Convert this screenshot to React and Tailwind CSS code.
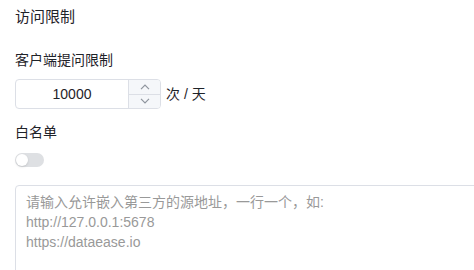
import React, { useState } from "react";

export default function App() {
  const [count, setCount] = useState(10000);
  const [whitelist, setWhitelist] = useState(false);

  return (
    <div
      className="w-[474px] h-[270px] overflow-hidden bg-white text-[#1f2329]"
      style={{ fontFamily: '"Liberation Sans", "Noto Sans CJK SC", sans-serif' }}
    >
      <div className="pl-[15px] pt-[6px] w-[520px]">
        {/* title */}
        <div className="text-[15px] leading-[22px]">访问限制</div>

        {/* daily limit */}
        <div className="mt-[21px] text-[14px] leading-[22px]">客户端提问限制</div>
        <div className="mt-[8px] flex items-center">
          <div className="flex h-[30px] w-[146px] rounded-[4px] border border-[#dcdfe6] overflow-hidden">
            <input
              className="flex-1 min-w-0 text-center text-[14px] outline-none text-[#1f2329]"
              value={count}
              onChange={(e) => setCount(e.target.value)}
            />
            <div className="flex flex-col w-[32px] border-l border-[#dcdfe6] bg-[#f5f7fa] text-[#8f959e]">
              <button
                className="flex-1 flex items-center justify-center border-b border-[#dcdfe6]"
                onClick={() => setCount((c) => Number(c) + 1)}
              >
                <svg width="10" height="6" viewBox="0 0 10 6" fill="none" stroke="currentColor" strokeWidth="1.2">
                  <path d="M1 5.2L5 1.2l4 4" />
                </svg>
              </button>
              <button
                className="flex-1 flex items-center justify-center"
                onClick={() => setCount((c) => Math.max(0, Number(c) - 1))}
              >
                <svg width="10" height="6" viewBox="0 0 10 6" fill="none" stroke="currentColor" strokeWidth="1.2">
                  <path d="M1 0.8l4 4 4-4" />
                </svg>
              </button>
            </div>
          </div>
          <span className="ml-[5px] text-[14px]">次 / 天</span>
        </div>

        {/* whitelist */}
        <div className="mt-[12px] text-[14px] leading-[22px]">白名单</div>
        <button
          onClick={() => setWhitelist(!whitelist)}
          className={`mt-[10px] relative block w-[29px] h-[14px] rounded-full ${whitelist ? "bg-[#3370ff]" : "bg-[#dee0e3]"}`}
        >
          <span
            className={`absolute top-[1px] h-[12px] w-[12px] rounded-full bg-white shadow-sm ${whitelist ? "left-[16px]" : "left-[1px]"}`}
          />
        </button>

        <textarea
          className="mt-[18px] block w-[480px] h-[90px] resize-none rounded-[4px] border border-[#dcdfe6] px-[10px] pt-[6px] pb-[5px] text-[14px] leading-[20px] outline-none placeholder:text-[#999]"
          placeholder={"请输入允许嵌入第三方的源地址，一行一个，如:\nhttp://127.0.0.1:5678\nhttps://dataease.io"}
        />
      </div>
    </div>
  );
}
